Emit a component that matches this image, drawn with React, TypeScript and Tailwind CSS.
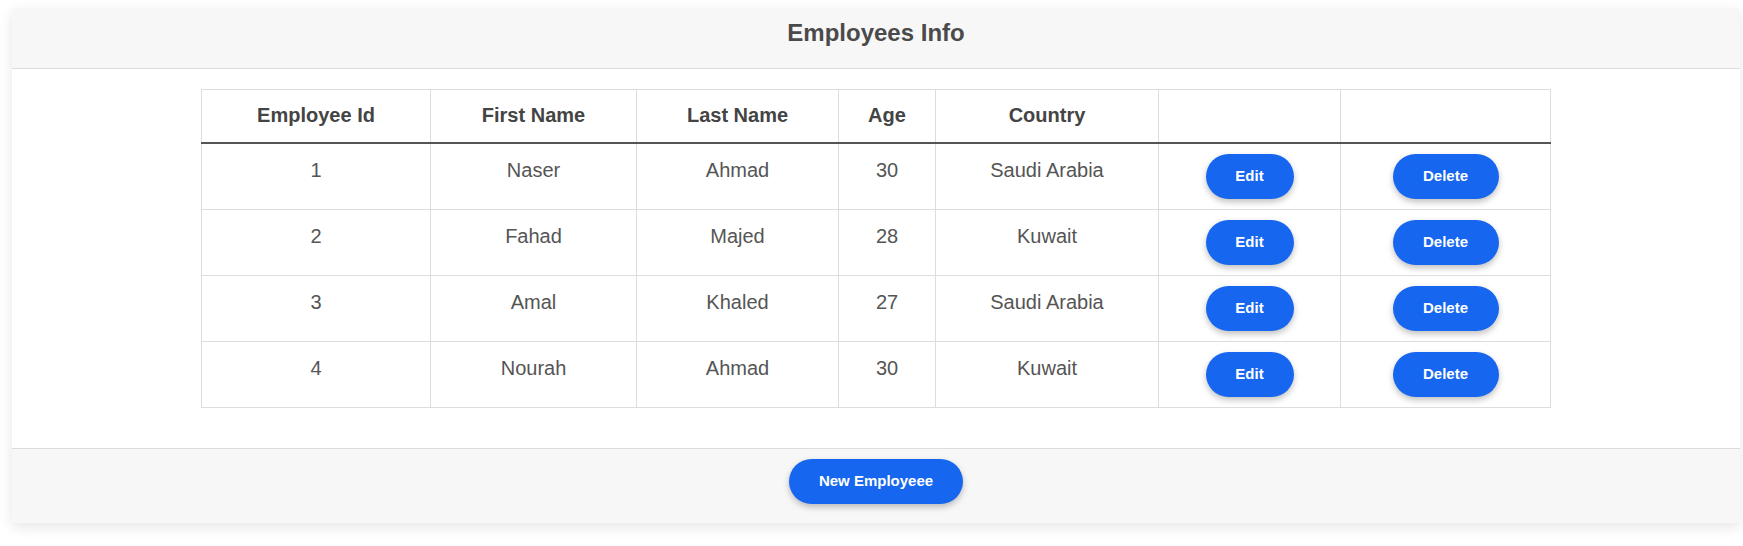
import React from "react";

const rows = [
  { id: 1, first: "Naser", last: "Ahmad", age: 30, country: "Saudi Arabia" },
  { id: 2, first: "Fahad", last: "Majed", age: 28, country: "Kuwait" },
  { id: 3, first: "Amal", last: "Khaled", age: 27, country: "Saudi Arabia" },
  { id: 4, first: "Nourah", last: "Ahmad", age: 30, country: "Kuwait" },
];

const btn =
  "h-[45px] rounded-full bg-[#1666f0] text-white text-[15px] font-bold shadow-[0_3px_6px_rgba(0,0,0,0.25)] inline-flex items-center justify-center";

export default function App() {
  return (
    <div className="min-h-[546px] bg-white pt-[8px] pl-[12px] font-['Liberation_Sans',Arial,sans-serif]">
      <div className="w-[1728px] rounded-[4px] bg-white shadow-[0_4px_14px_rgba(0,0,0,0.10)] overflow-hidden">
        <div className="h-[61px] bg-[#f7f7f7] border-b border-[#dcdcdc] pt-[11px] text-center">
          <h2 className="text-[24px] font-bold text-[#4a4a4a] leading-[28px]">Employees Info</h2>
        </div>
        <div className="pt-[20px] pb-[40px] flex justify-center">
          <table className="table-fixed w-[1349px] border-collapse border border-[#dddddd]">
            <colgroup>
              <col className="w-[229px]" />
              <col className="w-[206px]" />
              <col className="w-[202px]" />
              <col className="w-[97px]" />
              <col className="w-[223px]" />
              <col className="w-[182px]" />
              <col className="w-[210px]" />
            </colgroup>
            <thead>
              <tr className="border-b-2 border-[#555555]">
                {["Employee Id", "First Name", "Last Name", "Age", "Country", "", ""].map((h, i) => (
                  <th
                    key={i}
                    className="h-[53px] border-x border-[#dddddd] text-center align-middle text-[20px] font-bold text-[#444444] leading-[23px]"
                  >
                    {h}
                  </th>
                ))}
              </tr>
            </thead>
            <tbody>
              {rows.map((r) => (
                <tr key={r.id} className="border-t border-[#dddddd] first:border-t-0">
                  {[r.id, r.first, r.last, r.age, r.country].map((v, i) => (
                    <td
                      key={i}
                      className="border-x border-[#dddddd] align-top pt-[15px] text-center text-[20px] text-[#555555] leading-[23px]"
                    >
                      {v}
                    </td>
                  ))}
                  <td className="border-x border-[#dddddd] py-[10px] text-center align-middle">
                    <button className={btn + " w-[88px]"}>Edit</button>
                  </td>
                  <td className="border-x border-[#dddddd] py-[10px] text-center align-middle">
                    <button className={btn + " w-[106px]"}>Delete</button>
                  </td>
                </tr>
              ))}
            </tbody>
          </table>
        </div>
        <div className="bg-[#f7f7f7] border-t border-[#dcdcdc] pt-[10px] pb-[19px] flex justify-center">
          <button className={btn + " w-[174px]"}>New Employeee</button>
        </div>
      </div>
    </div>
  );
}
